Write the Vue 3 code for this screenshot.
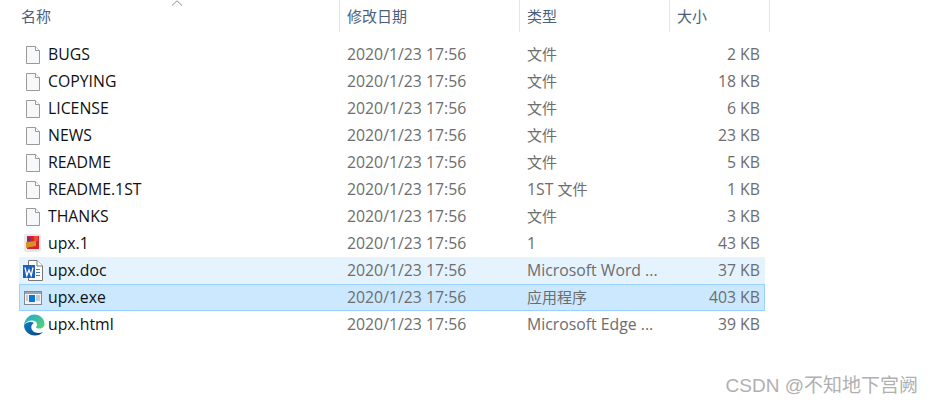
<script setup>
const rows = [
  { name: 'BUGS', cjk: '文件', size: '2 KB', icon: 'file' },
  { name: 'COPYING', cjk: '文件', size: '18 KB', icon: 'file' },
  { name: 'LICENSE', cjk: '文件', size: '6 KB', icon: 'file' },
  { name: 'NEWS', cjk: '文件', size: '23 KB', icon: 'file' },
  { name: 'README', cjk: '文件', size: '5 KB', icon: 'file' },
  { name: 'README.1ST', latin: '1ST ', cjk: '文件', size: '1 KB', icon: 'file' },
  { name: 'THANKS', cjk: '文件', size: '3 KB', icon: 'file' },
  { name: 'upx.1', latin: '1', size: '43 KB', icon: 'man' },
  { name: 'upx.doc', latin: 'Microsoft Word ...', size: '37 KB', icon: 'word', state: 'hover' },
  { name: 'upx.exe', cjk: '应用程序', size: '403 KB', icon: 'exe', state: 'selected' },
  { name: 'upx.html', latin: 'Microsoft Edge ...', size: '39 KB', icon: 'edge' },
]
</script>

<template>
  <div class="page">
    <svg class="sort" width="12" height="6" viewBox="0 0 12 6"><path d="M1 5.500 L6 .8 L11 5.500" fill="none" stroke="#8a8f96" stroke-width="1"/></svg>
    <div class="header">
      <div class="hcell first">名称</div>
      <div class="hcell">修改日期</div>
      <div class="hcell">类型</div>
      <div class="hcell">大小</div>
    </div>
    <div class="list">
      <div v-for="r in rows" :key="r.name" class="row" :class="r.state">
        <div class="name">
          <span class="icon">
            <svg v-if="r.icon === 'file'" width="18" height="20" viewBox="0 0 18 20">
              <path d="M2.500 1.500H11.500L15.500 5.500V18.500H2.500Z" fill="#f7f8f9" stroke="#9a9a9a"/>
              <path d="M11.500 1.500V5.500H15.500" fill="#fff" stroke="#9a9a9a"/>
            </svg>
            <svg v-else-if="r.icon === 'man'" width="18" height="20" viewBox="0 0 18 20">
              <rect x="0" y="0" width="17" height="18" rx="2" fill="#e9e9e9"/>
              <path d="M3 2H15V15H3Z" fill="#d8232a"/>
              <path d="M3 3H7V14H3Z" fill="#8a2a6e"/>
              <path d="M2 8L12 7V12L2 14Z" fill="#d8902a"/>
              <path d="M10 2H14V7H10Z" fill="#ee4a3a"/>
            </svg>
            <svg v-else-if="r.icon === 'word'" width="20" height="21" viewBox="0 0 20 21">
              <path d="M5.500 .5H14L19.500 6V20.500H5.500Z" fill="#fff" stroke="#777"/>
              <path d="M14 .5V6H19.500" fill="#fff" stroke="#777"/>
              <path d="M13 9.500H17M13 12.500H17M13 15.500H17" stroke="#3f80c8" stroke-width="1"/>
              <rect x="0" y="5" width="12" height="13" fill="#1f5fb8"/>
              <path d="M2 7.500L3.800 15.500L6 10L8.200 15.500L10 7.500" fill="none" stroke="#fff" stroke-width="1.300"/>
            </svg>
            <svg v-else-if="r.icon === 'exe'" width="18" height="14" viewBox="0 0 18 14">
              <rect x=".5" y=".5" width="17" height="13" fill="#f2f3f5" stroke="#7f8a95"/>
              <rect x="1" y="1" width="16" height="2" fill="#9aa5b0"/>
              <rect x="5" y="4" width="6" height="7" fill="#0a78d7"/>
              <path d="M12 5H16M12 7H16M12 9H16M2 5H4M2 7H4M2 9H4" stroke="#9aa3ad"/>
            </svg>
            <svg v-else class="edge" width="22" height="22" viewBox="0 0 22 22">
              <defs>
                <linearGradient id="edgeA" x1="0" y1="0" x2="1" y2="1"><stop offset="0" stop-color="#1180c8"/><stop offset="1" stop-color="#0a3f7d"/></linearGradient>
                <linearGradient id="edgeB" x1="0" y1="0" x2="1" y2="1"><stop offset="0" stop-color="#1fa8d8"/><stop offset="1" stop-color="#58d56a"/></linearGradient>
              </defs>
              <path d="M1 11C1 17 6 21.500 12 21.500C15 21.500 18 20.500 20 18C17 19.500 12 19.500 9.500 16.500C7.500 14 8 10.500 11 9C8 7 3 8 1 11Z" fill="url(#edgeA)"/>
              <path d="M1 11C2 5 6 .5 11.500 .5C17.500 .5 21.500 5 21.500 10C21.500 13 19 14.500 16.500 14.500C14.500 14.500 13 14 13 13C14.500 11.500 14.500 9.500 13 8C10.500 5.500 4 6 1 11Z" fill="url(#edgeB)"/>
            </svg>
          </span>
          <span class="label">{{ r.name }}</span>
        </div>
        <div class="cell date">2020/1/23 17:56</div>
        <div class="cell type"><span v-if="r.latin" class="latin">{{ r.latin }}</span><span v-if="r.cjk" class="cjk">{{ r.cjk }}</span></div>
        <div class="cell size">{{ r.size }}</div>
      </div>
    </div>
    <div class="mark">CSDN @不知地下宫阙</div>
  </div>
</template>

<style>
html, body { margin: 0; background: #fff; }
</style>

<style scoped>
.page {
  position: relative;
  width: 932px;
  height: 403px;
  overflow: hidden;
  background: #fff;
  font-family: "Open Sans", "Noto Sans CJK SC", sans-serif;
  font-size: 15.800px;
}
.sort { position: absolute; left: 171px; top: 0; }
.header {
  display: grid;
  grid-template-columns: 340px 180px 150px 100px;
  height: 32px;
}
.hcell {
  padding-left: 7px;
  box-sizing: border-box;
  border-right: 1px solid #e5e5e5;
  font-size: 15px;
  line-height: 32px;
  color: #4c607a;
}
.hcell.first { padding-left: 21px; }
.list {
  margin: 9px 0 0 19px;
  width: 746px;
}
.row {
  display: grid;
  grid-template-columns: 320px 180px 150px 96px;
  height: 27px;
  align-items: center;
}
.row.hover { background: #e5f3ff; }
.row.selected { background: #cce8ff; box-shadow: inset 0 0 0 1px #99d1ff; }
.name { display: flex; align-items: center; height: 100%; }
.icon { width: 29px; display: flex; justify-content: center; flex: none; margin-left: -1px; margin-right: 1px; }
.edge { transform: translateX(1px); }
.label { color: #111; margin-bottom: 2px; }
.cell { color: #6d6d6d; white-space: nowrap; margin-bottom: 2px; }
.cell.date { padding-left: 8px; }
.cell.type { padding-left: 8px; }
.cjk { font-size: 15px; }
.cell.size { text-align: right; padding-right: 5px; }
.mark {
  position: absolute;
  right: 14px;
  bottom: 6px;
  font-family: "Liberation Sans", "Noto Sans CJK SC", sans-serif;
  font-size: 19px;
  color: #b0b0b0;
}
</style>
